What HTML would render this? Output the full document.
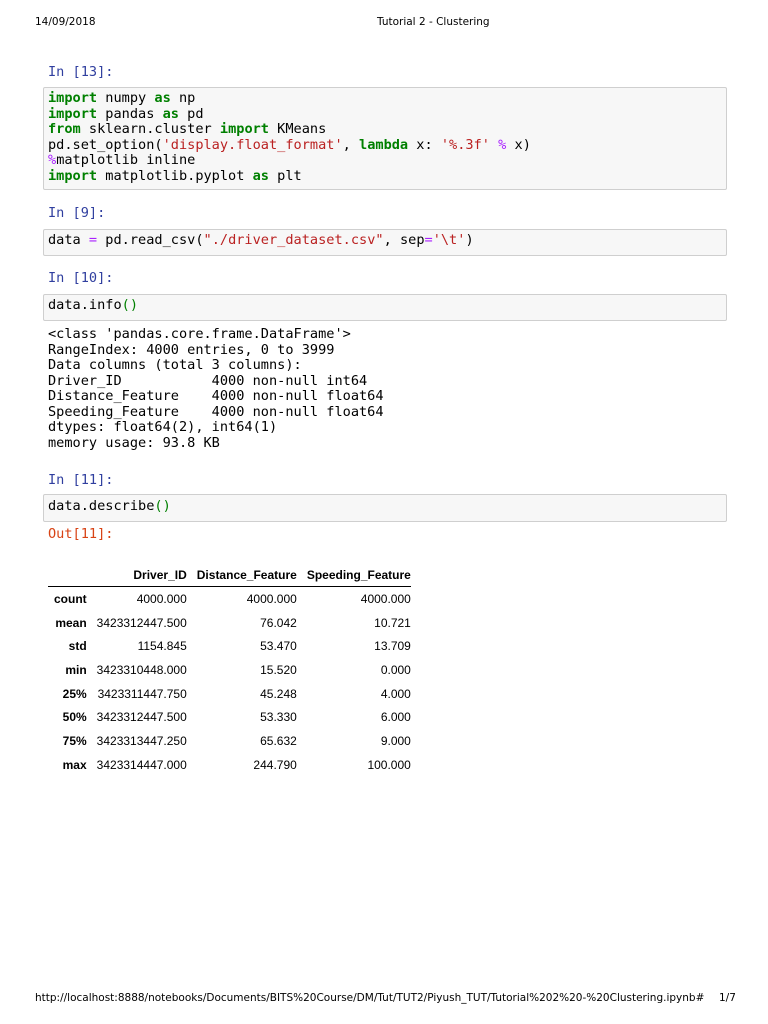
<!DOCTYPE html>
<html><head><meta charset="utf-8"><style>
body{margin:0;width:768px;height:1024px;background:#fff;position:relative;overflow:hidden;font-family:"DejaVu Sans","Liberation Sans",sans-serif;}
.a{position:absolute;white-space:pre;}
.m{font-family:"DejaVu Sans Mono","Liberation Mono",monospace;font-size:13.6px;line-height:15.5px;color:#000;}
.p{color:#303f9f;}
.o{color:#d84315;}
.box{position:absolute;left:43px;width:682px;border:1px solid #cfcfcf;background:#f7f7f7;border-radius:2px;}
.k{color:#008000;font-weight:bold;}
.s{color:#ba2121;}
.op{color:#aa22ff;}
.g{color:#008000;}
.hf{font-size:10.5px;color:#000;}
table{position:absolute;left:48px;top:564px;border-collapse:collapse;font-family:"Liberation Sans",Arial,sans-serif;font-size:12px;}
td,th{text-align:right;padding:0 0 0 10px;height:23.7px;}
th{font-weight:bold;}
thead th{height:22px;border-bottom:1px solid #000;}
tbody th{padding-left:6px;}
</style></head><body>
<div class="a hf" style="left:35px;top:16px">14/09/2018</div>
<div class="a hf" style="left:377px;top:16px">Tutorial 2 - Clustering</div>

<div class="a m p" style="left:48px;top:65px">In [13]:</div>
<div class="box" style="top:87px;height:101px"></div>
<div class="a m" style="left:48px;top:91px"><span class="k">import</span> numpy <span class="k">as</span> np
<span class="k">import</span> pandas <span class="k">as</span> pd
<span class="k">from</span> sklearn.cluster <span class="k">import</span> KMeans
pd.set_option(<span class="s">'display.float_format'</span>, <span class="k">lambda</span> x: <span class="s">'%.3f'</span> <span class="op">%</span> x)
<span class="op">%</span>matplotlib inline
<span class="k">import</span> matplotlib.pyplot <span class="k">as</span> plt</div>

<div class="a m p" style="left:48px;top:206px">In [9]:</div>
<div class="box" style="top:229px;height:25px"></div>
<div class="a m" style="left:48px;top:233px">data <span class="op">=</span> pd.read_csv(<span class="s">"./driver_dataset.csv"</span>, sep<span class="op">=</span><span class="s">'\t'</span>)</div>

<div class="a m p" style="left:48px;top:271px">In [10]:</div>
<div class="box" style="top:294px;height:25px"></div>
<div class="a m" style="left:48px;top:298px">data.info<span class="g">()</span></div>

<div class="a m" style="left:48px;top:327px">&lt;class 'pandas.core.frame.DataFrame'&gt;
RangeIndex: 4000 entries, 0 to 3999
Data columns (total 3 columns):
Driver_ID           4000 non-null int64
Distance_Feature    4000 non-null float64
Speeding_Feature    4000 non-null float64
dtypes: float64(2), int64(1)
memory usage: 93.8 KB</div>

<div class="a m p" style="left:48px;top:473px">In [11]:</div>
<div class="box" style="top:494px;height:26px"></div>
<div class="a m" style="left:48px;top:499px">data.describe<span class="g">()</span></div>
<div class="a m o" style="left:48px;top:527px">Out[11]:</div>

<table>
<thead><tr><th></th><th>Driver_ID</th><th>Distance_Feature</th><th>Speeding_Feature</th></tr></thead>
<tbody>
<tr><th>count</th><td>4000.000</td><td>4000.000</td><td>4000.000</td></tr>
<tr><th>mean</th><td>3423312447.500</td><td>76.042</td><td>10.721</td></tr>
<tr><th>std</th><td>1154.845</td><td>53.470</td><td>13.709</td></tr>
<tr><th>min</th><td>3423310448.000</td><td>15.520</td><td>0.000</td></tr>
<tr><th>25%</th><td>3423311447.750</td><td>45.248</td><td>4.000</td></tr>
<tr><th>50%</th><td>3423312447.500</td><td>53.330</td><td>6.000</td></tr>
<tr><th>75%</th><td>3423313447.250</td><td>65.632</td><td>9.000</td></tr>
<tr><th>max</th><td>3423314447.000</td><td>244.790</td><td>100.000</td></tr>
</tbody></table>

<div class="a hf" style="left:35px;top:992px">http://localhost:8888/notebooks/Documents/BITS%20Course/DM/Tut/TUT2/Piyush_TUT/Tutorial%202%20-%20Clustering.ipynb#</div>
<div class="a hf" style="left:719px;top:992px">1/7</div>
</body></html>
